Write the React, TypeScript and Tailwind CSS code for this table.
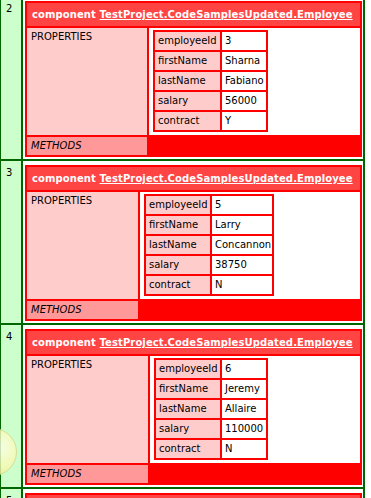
import React from 'react';

type Employee = {
  idx: number;
  labelW: string;
  keyW: string;
  valW: string;
  employeeId: string;
  firstName: string;
  lastName: string;
  salary: string;
  contract: string;
};

const rows: Employee[] = [
  { idx: 2, labelW: 'w-[120px]', keyW: 'w-[65px]', valW: 'w-[44px]', employeeId: '3', firstName: 'Sharna', lastName: 'Fabiano', salary: '56000', contract: 'Y' },
  { idx: 3, labelW: 'w-[111px]', keyW: 'w-[64px]', valW: 'w-[60px]', employeeId: '5', firstName: 'Larry', lastName: 'Concannon', salary: '38750', contract: 'N' },
  { idx: 4, labelW: 'w-[121px]', keyW: 'w-[64px]', valW: 'w-[44px]', employeeId: '6', firstName: 'Jeremy', lastName: 'Allaire', salary: '110000', contract: 'N' },
  { idx: 5, labelW: 'w-[120px]', keyW: 'w-[64px]', valW: 'w-[44px]', employeeId: '7', firstName: 'Ben', lastName: 'Forta', salary: '72000', contract: 'Y' },
];

function Component({ e }: { e: Employee }) {
  const props: [string, string][] = [
    ['employeeId', e.employeeId],
    ['firstName', e.firstName],
    ['lastName', e.lastName],
    ['salary', e.salary],
    ['contract', e.contract],
  ];

  return (
    <div className="w-[337px] bg-[#ff0000] p-[2px] flex flex-col gap-[2px]">
      {/* header */}
      <div className="bg-[#ff4444] text-white font-bold leading-[13px] tracking-[0.1px] py-[5px] pl-[5px] whitespace-nowrap">
        component <span className="underline">TestProject.CodeSamplesUpdated.Employee</span>
      </div>

      {/* properties */}
      <div className="flex gap-[2px]">
        <div className={`${e.labelW} shrink-0 bg-[#ffcccc] pl-[4px] pt-[3px]`}>PROPERTIES</div>
        <div className="flex-1 bg-white pl-[4px] pt-[2px] pb-[3px]">
          <div className="inline-flex flex-col gap-[2px] bg-[#ff0000] p-[2px]">
            {props.map(([k, v]) => (
              <div key={k} className="flex gap-[2px] h-[18px]">
                <div className={`${e.keyW} bg-[#ffcccc] pl-[3px] pt-[3px]`}>{k}</div>
                <div className={`${e.valW} bg-white pl-[3px] pt-[3px] whitespace-nowrap`}>{v}</div>
              </div>
            ))}
          </div>
        </div>
      </div>

      {/* methods */}
      <div className="flex h-[18px]">
        <div className={`${e.labelW} shrink-0 bg-[#ff9999] pl-[4px] pt-[3px] italic`}>METHODS</div>
      </div>
    </div>
  );
}

export default function App() {
  return (
    <div className="relative h-[498px] overflow-hidden bg-white text-black text-[10px] leading-[12px] font-['DejaVu_Sans',sans-serif]">
      <div className="-mt-[3px] w-[365px] bg-[#006600] pl-[1px] pr-[2px] flex flex-col gap-[2px]">
        {rows.map((e) => (
          <div key={e.idx} className="flex gap-[2px]">
            <div className="w-[20px] shrink-0 bg-[#ccffcc] pl-[5px] pt-[6px]">{e.idx}</div>
            <div className="w-[340px] bg-white pl-[2px] pt-[4px] pb-[2px]">
              <Component e={e} />
            </div>
          </div>
        ))}
      </div>

      {/* cursor highlight */}
      <div className="absolute left-[-31px] top-[428px] w-[48px] h-[48px] rounded-full opacity-80 border border-[#d6d68a] bg-[radial-gradient(circle_at_62%_40%,#ffffee_0%,#fafab8_45%,#e6e68c_100%)]" />
    </div>
  );
}
